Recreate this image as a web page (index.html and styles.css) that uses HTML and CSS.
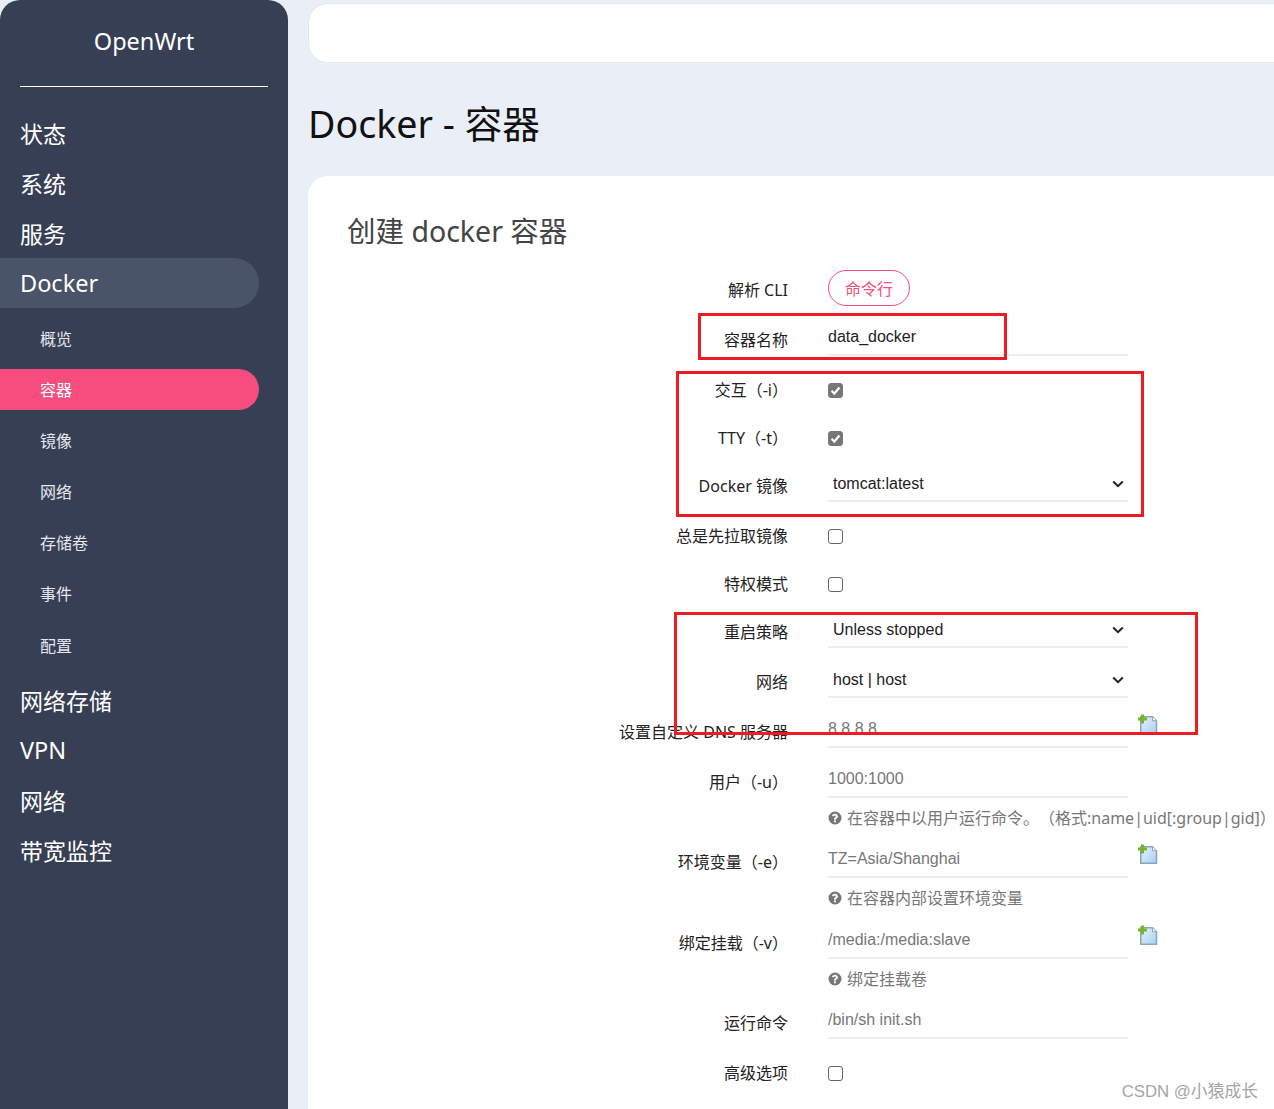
FILE: index.html
```html
<!DOCTYPE html>
<html lang="zh-CN">
<head>
<meta charset="utf-8">
<title>Docker - 容器</title>
<link rel="stylesheet" href="styles.css">
</head>
<body>
<svg class="defs" width="0" height="0" aria-hidden="true">
  <defs>
    <linearGradient id="docfill" x1="0" y1="0" x2="1" y2="1">
      <stop offset="0" stop-color="#e6f2fc"/>
      <stop offset="1" stop-color="#a9d0f2"/>
    </linearGradient>
  </defs>
  <symbol id="chev" viewBox="0 0 12 8"><path d="M1.200 1.500 6 6.200l4.800-4.700" fill="none" stroke="#222" stroke-width="2"/></symbol>
  <symbol id="add" viewBox="0 0 20 20">
    <path d="M2.750 2.750H14.500l4 4v12.500H2.750z" fill="url(#docfill)" stroke="#8ba5bd" stroke-width="1.500"/>
    <path d="M14.500 2.750v4h4" fill="#f2f8fd" stroke="#8ba5bd"/>
    <path d="M3 .5h3v3h3v3H6v3H3v-3H0v-3h3z" fill="#74b52c"/>
  </symbol>
  <symbol id="help" viewBox="0 0 14 14">
    <path fill-rule="evenodd" fill="#777" d="M7 .5a6.500 6.500 0 1 1 0 13 6.500 6.500 0 0 1 0-13zM6 9.600v1.700h2V9.600zM7 2.800c-1.500 0-2.600.7-3 2l1.500.7c.3-.7.7-1 1.400-1 .6 0 1 .3 1 .8 0 .4-.3.7-.9 1.100-.7.5-1 1-1 1.700v.6h1.900V8.300c0-.3.2-.5.7-.8.8-.5 1.300-1.100 1.300-2 0-1.600-1.200-2.700-2.900-2.700z"/>
  </symbol>
</svg>

<div class="layout">
  <aside class="sidebar">
    <div class="brand">OpenWrt</div>
    <nav class="menu">
      <a class="item">状态</a>
      <a class="item">系统</a>
      <a class="item">服务</a>
      <a class="item item-latin is-open">Docker</a>
      <div class="submenu">
        <a class="sub">概览</a>
        <a class="sub is-active">容器</a>
        <a class="sub">镜像</a>
        <a class="sub">网络</a>
        <a class="sub">存储卷</a>
        <a class="sub">事件</a>
        <a class="sub">配置</a>
      </div>
      <a class="item">网络存储</a>
      <a class="item item-latin">VPN</a>
      <a class="item">网络</a>
      <a class="item">带宽监控</a>
    </nav>
  </aside>

  <main class="main">
    <header class="topbar"></header>
    <h1 class="page-title">Docker - 容器</h1>
    <section class="card">
      <h2 class="card-title">创建 docker 容器</h2>
      <form class="form">
        <div class="row row-cli">
          <label class="label">解析 CLI</label>
          <div class="control"><button type="button" class="pill-btn">命令行</button></div>
        </div>
        <div class="row row-input">
          <label class="label">容器名称</label>
          <div class="control"><div class="field">data_docker</div></div>
        </div>
        <div class="row row-check">
          <label class="label">交互（-i）</label>
          <div class="control"><span class="check is-on"><svg viewBox="0 0 15 15"><path d="M3.600 7.800 6.300 10.600 11.400 4.500" fill="none" stroke="#fff" stroke-width="2.200"/></svg></span></div>
        </div>
        <div class="row row-check">
          <label class="label">TTY（-t）</label>
          <div class="control"><span class="check is-on"><svg viewBox="0 0 15 15"><path d="M3.600 7.800 6.300 10.600 11.400 4.500" fill="none" stroke="#fff" stroke-width="2.200"/></svg></span></div>
        </div>
        <div class="row row-input">
          <label class="label">Docker 镜像</label>
          <div class="control"><div class="field field-select">tomcat:latest<svg class="chev"><use href="#chev"/></svg></div></div>
        </div>
        <div class="row row-check">
          <label class="label">总是先拉取镜像</label>
          <div class="control"><span class="check"></span></div>
        </div>
        <div class="row row-check">
          <label class="label">特权模式</label>
          <div class="control"><span class="check"></span></div>
        </div>
        <div class="row row-input">
          <label class="label">重启策略</label>
          <div class="control"><div class="field field-select">Unless stopped<svg class="chev"><use href="#chev"/></svg></div></div>
        </div>
        <div class="row row-input">
          <label class="label">网络</label>
          <div class="control"><div class="field field-select">host | host<svg class="chev"><use href="#chev"/></svg></div></div>
        </div>
        <div class="row row-input">
          <label class="label">设置自定义 DNS 服务器</label>
          <div class="control"><div class="field is-ph">8.8.8.8</div><svg class="add"><use href="#add"/></svg></div>
        </div>
        <div class="row row-help">
          <label class="label">用户（-u）</label>
          <div class="control"><div class="field is-ph">1000:1000</div>
            <p class="help"><svg class="help-icon"><use href="#help"/></svg>在容器中以用户运行命令。（格式:name|uid[:group|gid]）</p></div>
        </div>
        <div class="row row-help row-help-wide">
          <label class="label">环境变量（-e）</label>
          <div class="control"><div class="field is-ph">TZ=Asia/Shanghai</div><svg class="add"><use href="#add"/></svg>
            <p class="help"><svg class="help-icon"><use href="#help"/></svg>在容器内部设置环境变量</p></div>
        </div>
        <div class="row row-help">
          <label class="label">绑定挂载（-v）</label>
          <div class="control"><div class="field is-ph">/media:/media:slave</div><svg class="add"><use href="#add"/></svg>
            <p class="help"><svg class="help-icon"><use href="#help"/></svg>绑定挂载卷</p></div>
        </div>
        <div class="row row-input">
          <label class="label">运行命令</label>
          <div class="control"><div class="field is-ph">/bin/sh init.sh</div></div>
        </div>
        <div class="row row-check">
          <label class="label">高级选项</label>
          <div class="control"><span class="check"></span></div>
        </div>
      </form>
    </section>
  </main>
</div>

<div class="mark mark-name"></div>
<div class="mark mark-group"></div>
<div class="mark mark-net"></div>
<div class="watermark">CSDN @小猿成长</div>
</body>
</html>
```
FILE: styles.css
```css
html, body {
  margin: 0;
  height: 1109px;
  overflow: hidden;
  background: #eaeff7;
}
body {
  position: relative;
  font-family: "Liberation Sans", "Noto Sans CJK SC", sans-serif;
  font-size: 16px;
  color: #222;
}
.defs { position: absolute; }
.layout {
  display: flex;
  height: 1109px;
}

/* sidebar */
.sidebar {
  flex: 0 0 288px;
  background: #373f55;
  border-radius: 20px 20px 0 0;
  color: #fff;
  font-family: "Noto Sans", "Noto Sans CJK SC", sans-serif;
}
.brand {
  margin: 0 20px;
  height: 86px;
  border-bottom: 1px solid #fff;
  text-align: center;
  font-size: 23.500px;
  line-height: 82px;
}
.menu {
  display: flex;
  flex-direction: column;
  padding-top: 21px;
}
.item {
  height: 50px;
  line-height: 52px;
  padding-left: 20px;
  font-size: 23px;
  margin-right: 29px;
}
.item-latin {
  font-size: 23.500px;
  line-height: 50px;
}
.item.is-open {
  background: #4a5468;
  border-radius: 0 25px 25px 0;
}
.submenu {
  display: flex;
  flex-direction: column;
  padding-top: 10px;
}
.sub {
  height: 41px;
  line-height: 43px;
  margin: 0 29px 10.100px 0;
  padding-left: 40px;
  font-size: 16px;
  color: #e6e8ee;
}
.sub:last-child { margin-bottom: 9.600px; }
.sub.is-active {
  background: #f64d7e;
  border-radius: 0 21px 21px 0;
  color: #fff;
}

/* main */
.main {
  flex: 0 0 1000px;
  margin-left: 20px;
  display: flex;
  flex-direction: column;
  padding-top: 3px;
}
.topbar {
  height: 58px;
  background: #fff;
  border: 1px solid #e4e7ec;
  border-radius: 20px;
  flex: none;
}
.page-title {
  margin: 0;
  padding-top: 36px;
  height: 77px;
  font-family: "Noto Sans", "Noto Sans CJK SC", sans-serif;
  font-weight: 400;
  font-size: 37.600px;
  line-height: 50px;
  color: #111;
  flex: none;
}
.card {
  flex: 1;
  background: #fff;
  border-radius: 20px 20px 0 0;
  padding: 32px 0 0 39px;
}
.card-title {
  margin: 0;
  height: 62px;
  font-family: "Noto Sans", "Noto Sans CJK SC", sans-serif;
  font-weight: 400;
  font-size: 28.500px;
  line-height: 46px;
  color: #444;
}

/* form */
.form {
  display: flex;
  flex-direction: column;
}
.row {
  display: flex;
  align-items: flex-start;
}
.row-cli { height: 48px; }
.row-input { height: 50px; }
.row-check { height: 48px; }
.row-help { height: 80px; }
.row-help-wide { height: 81px; }
.label {
  flex: 0 0 441px;
  margin-right: 40px;
  text-align: right;
  font-family: "Noto Sans", "Noto Sans CJK SC", sans-serif;
  line-height: 45px;
  white-space: nowrap;
}
.row-cli .label { line-height: 41px; }
.control {
  position: relative;
  flex: 0 0 300px;
  min-width: 0;
  width: 300px;
}
.pill-btn {
  display: block;
  width: 82px;
  height: 36px;
  padding: 0;
  background: #fff;
  border: 1px solid #f64d7e;
  border-radius: 18px;
  color: #f64d7e;
  font: inherit;
}
.field {
  position: relative;
  height: 36px;
  line-height: 38px;
  border-bottom: 2px solid #eee;
  white-space: nowrap;
}
.field-select {
  padding-left: 5px;
  line-height: 39px;
}
.is-ph { color: #777; }
.chev {
  position: absolute;
  right: 4px;
  top: 16px;
  width: 12px;
  height: 8px;
}
.add {
  position: absolute;
  left: 310px;
  top: 4px;
  width: 20px;
  height: 20px;
}
.check {
  display: block;
  box-sizing: border-box;
  width: 15px;
  height: 15px;
  margin-top: 15px;
  border: 1px solid #666;
  border-radius: 3px;
  background: #fff;
}
.check.is-on {
  background: #777;
  border-color: #777;
  position: relative;
}
.check.is-on svg {
  position: absolute;
  left: -1px;
  top: -1px;
  width: 15px;
  height: 15px;
}
.help {
  margin: 9px 0 0;
  font-family: "Noto Sans", "Noto Sans CJK SC", sans-serif;
  line-height: 22px;
  color: #777;
  white-space: nowrap;
  text-spacing-trim: space-all;
}
.help-icon {
  width: 14px;
  height: 14px;
  margin-right: 5px;
  vertical-align: -1px;
}

/* annotations pasted over the screenshot */
.mark {
  position: absolute;
  box-sizing: border-box;
  border: 3px solid #ed1c24;
}
.mark-name { left: 698px; top: 313px; width: 309px; height: 47px; }
.mark-group { left: 676px; top: 371px; width: 468px; height: 146px; }
.mark-net { left: 674px; top: 612px; width: 524px; height: 123px; }
.watermark {
  position: absolute;
  right: 16px;
  top: 1080px;
  font-size: 16.800px;
  line-height: 24px;
  color: #a5a5a5;
}
```
